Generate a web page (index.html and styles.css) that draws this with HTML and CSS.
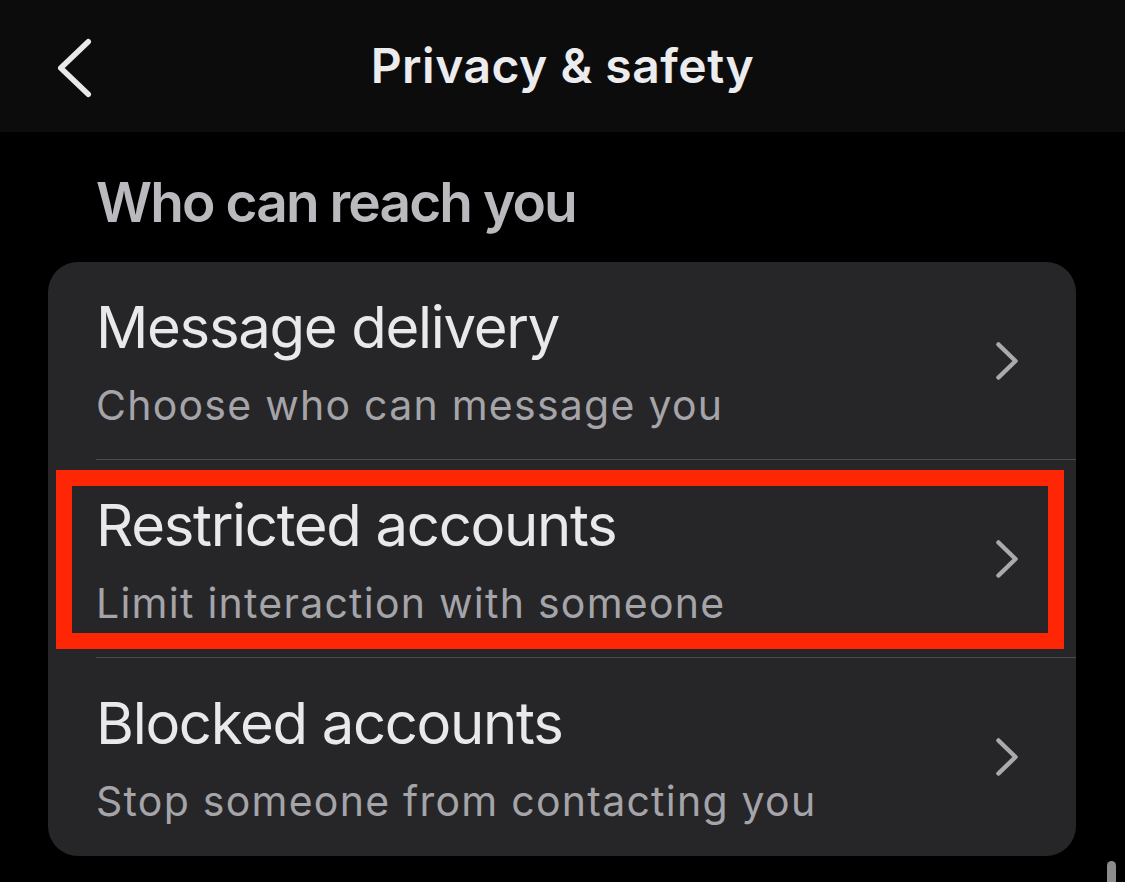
FILE: index.html
```html
<!DOCTYPE html>
<html lang="en">
<head>
<meta charset="utf-8">
<title>Privacy &amp; safety</title>
<link rel="stylesheet" href="styles.css">
</head>
<body>
<div class="screen">
  <header class="topbar">
    <div class="topbar-left">
      <svg class="back" width="38" height="68" viewBox="0 0 38 68" aria-hidden="true">
        <path d="M32.25 9.75 L4.75 36 L32.25 62.25" fill="none" stroke="#e9e9ec" stroke-width="5.5" stroke-linecap="round" stroke-linejoin="round"/>
      </svg>
    </div>
    <h1 class="title">Privacy &amp; safety</h1>
    <div class="topbar-right"></div>
  </header>

  <main class="content">
    <h2 class="section-title">Who can reach you</h2>
    <div class="card">
      <div class="row">
        <div class="row-text">
          <div class="row-title">Message delivery</div>
          <div class="row-sub">Choose who can message you</div>
        </div>
        <svg class="chev" width="26" height="44" viewBox="0 0 26 44" aria-hidden="true">
          <path d="M4.5 5.5 L21.5 22 L4.5 38.5" fill="none" stroke="#a9a9ae" stroke-width="4.5" stroke-linecap="round" stroke-linejoin="round"/>
        </svg>
      </div>
      <div class="divider"></div>
      <div class="row row-highlight">
        <div class="row-text">
          <div class="row-title">Restricted accounts</div>
          <div class="row-sub">Limit interaction with someone</div>
        </div>
        <svg class="chev" width="26" height="44" viewBox="0 0 26 44" aria-hidden="true">
          <path d="M4.5 5.5 L21.5 22 L4.5 38.5" fill="none" stroke="#a9a9ae" stroke-width="4.5" stroke-linecap="round" stroke-linejoin="round"/>
        </svg>
        <div class="highlight"></div>
      </div>
      <div class="divider"></div>
      <div class="row row-last">
        <div class="row-text">
          <div class="row-title">Blocked accounts</div>
          <div class="row-sub">Stop someone from contacting you</div>
        </div>
        <svg class="chev" width="26" height="44" viewBox="0 0 26 44" aria-hidden="true">
          <path d="M4.5 5.5 L21.5 22 L4.5 38.5" fill="none" stroke="#a9a9ae" stroke-width="4.5" stroke-linecap="round" stroke-linejoin="round"/>
        </svg>
      </div>
    </div>
  </main>
  <div class="scrollbar"></div>
</div>
</body>
</html>
```

FILE: styles.css
```css
* { box-sizing: border-box; }

html, body {
  margin: 0;
  padding: 0;
  background: #000;
}

body {
  font-family: Inter, "Noto Sans", "Liberation Sans", sans-serif;
  color: #e9e9ec;
}

.screen {
  position: relative;
  width: 1125px;
  height: 882px;
  overflow: hidden;
  background: #000;
}

.topbar {
  height: 132px;
  background: #0c0c0d;
  display: grid;
  grid-template-columns: 1fr auto 1fr;
  align-items: center;
}

.topbar-left {
  padding-left: 56px;
  display: flex;
  align-items: center;
}

.back { display: block; }

.title {
  margin: 0;
  font-size: 48px;
  line-height: 58px;
  font-weight: 600;
  letter-spacing: 0.5px;
  color: #ececef;
  white-space: nowrap;
}

.content {
  padding: 37px 49px 0 48px;
}

.section-title {
  margin: 0 0 27px 48px;
  font-size: 55px;
  line-height: 66px;
  font-weight: 600;
  letter-spacing: -1.9px;
  color: #b9b9be;
}

.card {
  background: #262628;
  border-radius: 30px;
  width: 1028px;
}

.row {
  position: relative;
  height: 197px;
  display: flex;
  align-items: center;
  padding: 0 56px 0 48px;
}

.row-last { height: 198px; }

.row-text {
  flex: 1;
  display: flex;
  flex-direction: column;
}

.row-title {
  font-size: 58px;
  line-height: 70px;
  font-weight: 400;
  letter-spacing: -1.3px;
  color: #e9e9ec;
  white-space: nowrap;
}

.row-sub {
  margin-top: 19px;
  font-size: 41px;
  line-height: 49px;
  font-weight: 400;
  letter-spacing: 1.25px;
  color: #a4a4a9;
  white-space: nowrap;
}

.chev { display: block; flex: none; }

.divider {
  height: 1px;
  margin-left: 48px;
  background: #4a4a4d;
}

.highlight {
  position: absolute;
  left: 8px;
  top: 10px;
  width: 1008px;
  height: 179px;
  border: 16px solid #ff2605;
  pointer-events: none;
}

.scrollbar {
  position: absolute;
  right: 9px;
  top: 861px;
  width: 9px;
  height: 30px;
  border-radius: 5px;
  background: #8c8c8c;
}
```
